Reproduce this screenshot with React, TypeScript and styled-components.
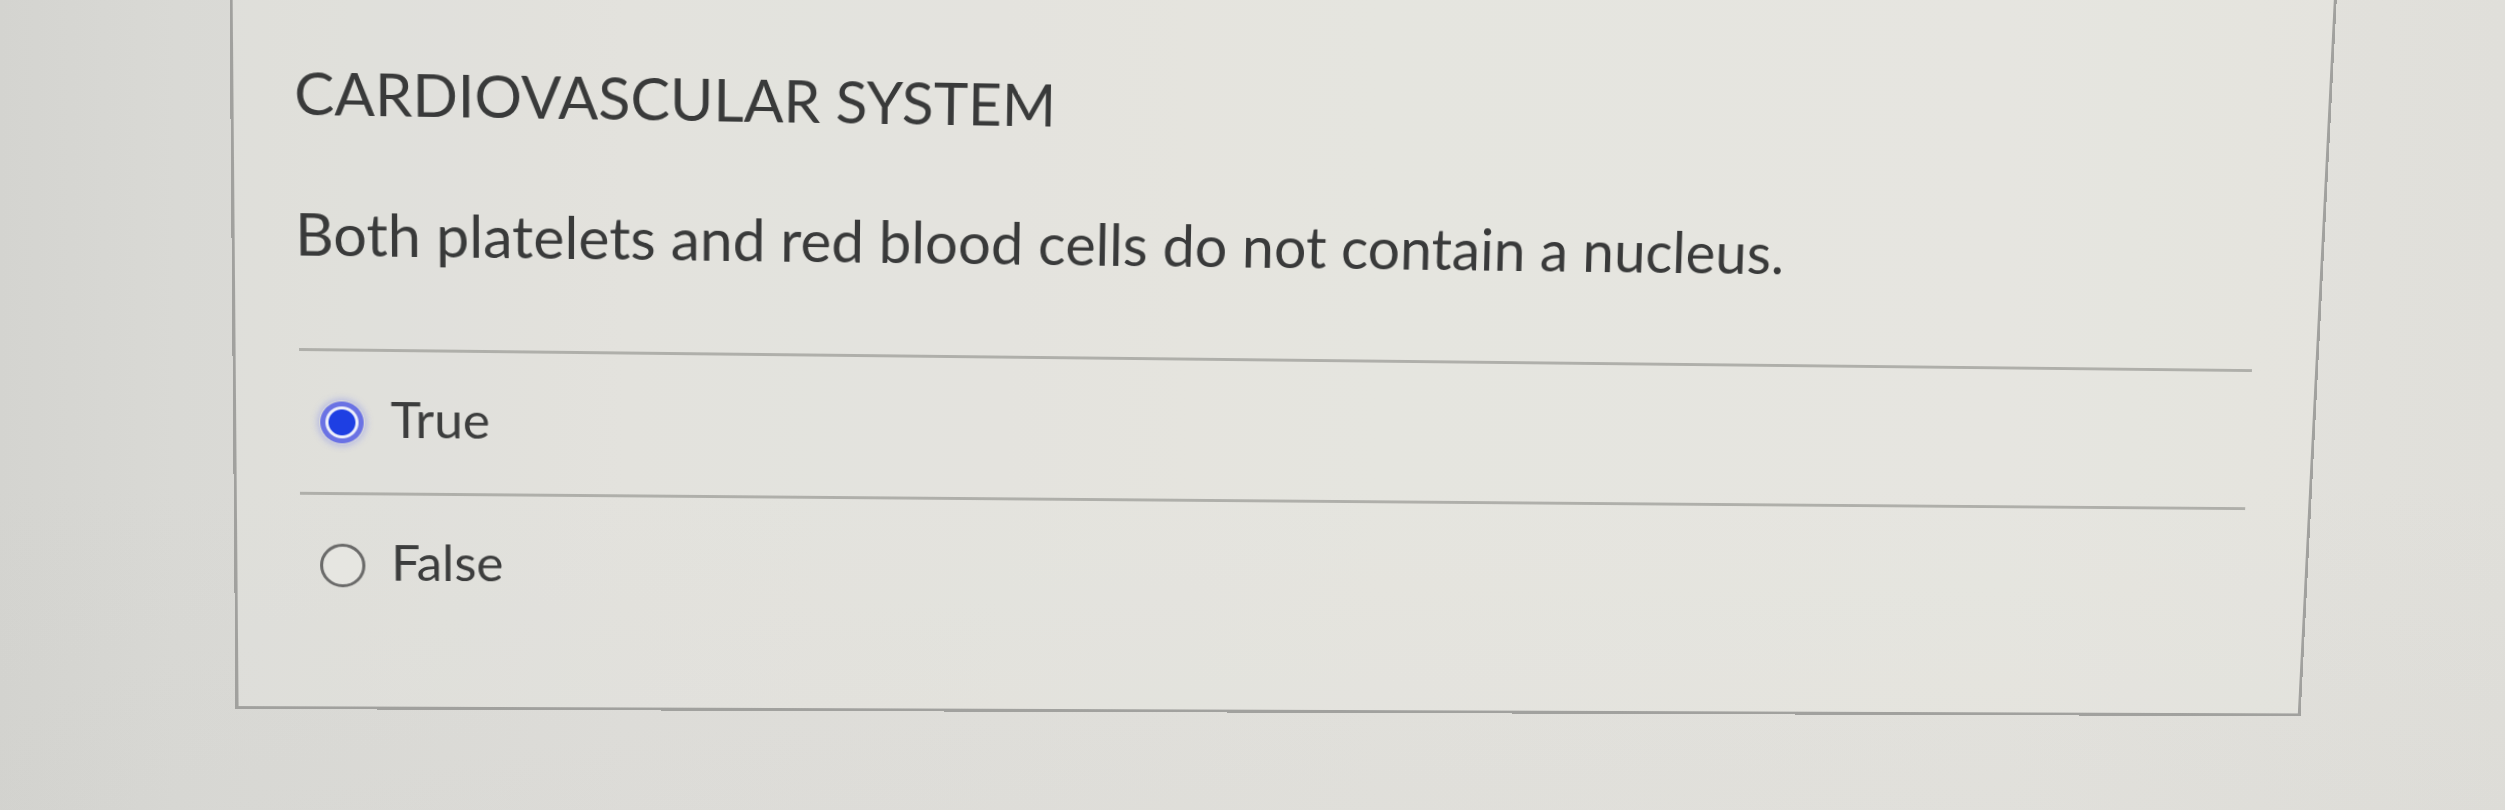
import React from "react";
import styled, { createGlobalStyle } from "styled-components";

type Pt = [number, number];

/* Card size before the perspective warp */
const CARD_W = 2090;
const CARD_H = 765;

/* Where the card corners land on screen, relative to its own top-left corner */
const CARD_CORNERS: Pt[] = [
  [0, 0],
  [2108.5, 40.2],
  [6.5, 769],
  [2071.3, 776.2],
];

/* Solve an n×n linear system with Gaussian elimination */
function solveLinear(A: number[][], b: number[]): number[] {
  const n = b.length;
  const M = A.map((row, i) => [...row, b[i]]);
  for (let col = 0; col < n; col++) {
    let pivot = col;
    for (let r = col + 1; r < n; r++) {
      if (Math.abs(M[r][col]) > Math.abs(M[pivot][col])) pivot = r;
    }
    [M[col], M[pivot]] = [M[pivot], M[col]];
    for (let r = 0; r < n; r++) {
      if (r === col) continue;
      const k = M[r][col] / M[col][col];
      for (let c = col; c <= n; c++) M[r][c] -= k * M[col][c];
    }
  }
  return M.map((row, i) => row[n] / row[i]);
}

/* Projective transform that maps the w×h box onto the given quad */
function quadWarp(w: number, h: number, dst: Pt[]): string {
  const src: Pt[] = [
    [0, 0],
    [w, 0],
    [0, h],
    [w, h],
  ];
  const A: number[][] = [];
  const rhs: number[] = [];
  for (let i = 0; i < 4; i++) {
    const [x, y] = src[i];
    const [X, Y] = dst[i];
    A.push([x, y, 1, 0, 0, 0, -x * X, -y * X]);
    rhs.push(X);
    A.push([0, 0, 0, x, y, 1, -x * Y, -y * Y]);
    rhs.push(Y);
  }
  const [a, b, c, d, e, f, g, hh] = solveLinear(A, rhs);
  return `matrix3d(${a},${d},0,${g},${b},${e},0,${hh},0,0,1,0,${c},${f},0,1)`;
}

const GlobalStyle = createGlobalStyle`
  html, body {
    margin: 0;
    padding: 0;
  }
  body {
    width: 2505px;
    height: 810px;
    overflow: hidden;
    background:
      linear-gradient(180deg, rgba(255, 255, 255, 0) 60%, rgba(200, 200, 196, 0.12) 100%),
      linear-gradient(90deg, #d4d4d0 0%, #d9d9d5 7%, #dfdeda 25%, #e3e2dd 55%, #e4e3de 80%, #e0dfda 100%);
    font-family: Lato, "Noto Sans", "Liberation Sans", sans-serif;
    color: #393a3a;
  }
`;

const Page = styled.main`
  box-sizing: border-box;
  height: 810px;
  padding-left: 228.5px;
`;

/* Question card; its top edge sits above the visible area */
const Card = styled.section`
  box-sizing: border-box;
  width: ${CARD_W}px;
  height: ${CARD_H}px;
  margin-top: -60px;
  padding: 111px 66px 0 58px;
  border: 3px solid #a1a19e;
  background: rgba(236, 235, 230, 0.3);
  transform-origin: 0 0;
`;

const Heading = styled.h2`
  margin: 0;
  font-size: 57.4px;
  font-weight: 400;
  line-height: 1.2;
`;

const Prompt = styled.p`
  margin: 70px 0 79px;
  font-size: 57.2px;
  font-weight: 400;
  line-height: 1.2;
`;

const Answers = styled.div`
  display: flex;
  flex-direction: column;
  margin-left: 3px;
`;

const Option = styled.label`
  display: flex;
  align-items: center;
  gap: 25px;
  padding: 37px 0 44px 19px;
  border-top: 3px solid #afafaa;
  cursor: pointer;
`;

const Radio = styled.span<{ $checked: boolean }>`
  box-sizing: border-box;
  flex: none;
  width: 44px;
  height: 44px;
  margin-top: 8px;
  border-radius: 50%;
  ${(p) =>
    p.$checked
      ? `
    background: radial-gradient(circle, #1e3fe3 0 12.5px, #eef0fb 13.5px 15.5px, #6a72e4 16.5px 20.5px, transparent 21.5px);
    box-shadow: 0 0 6px 2px rgba(110, 120, 235, 0.35);
  `
      : `
    border: 3px solid #6a6a69;
    background: rgba(240, 240, 236, 0.4);
  `}
`;

const LabelText = styled.span`
  font-size: 50px;
  line-height: 60px;
  color: #3c3d3d;
`;

const options = [
  { label: "True", checked: true },
  { label: "False", checked: false },
];

export default function App() {
  const warp = quadWarp(CARD_W, CARD_H, CARD_CORNERS);
  return (
    <>
      <GlobalStyle />
      <Page>
        <Card style={{ transform: warp }}>
          <Heading>CARDIOVASCULAR SYSTEM</Heading>
          <Prompt>Both platelets and red blood cells do not contain a nucleus.</Prompt>
          <Answers role="radiogroup">
            {options.map((o) => (
              <Option key={o.label}>
                <Radio $checked={o.checked} role="radio" aria-checked={o.checked} />
                <LabelText>{o.label}</LabelText>
              </Option>
            ))}
          </Answers>
        </Card>
      </Page>
    </>
  );
}
